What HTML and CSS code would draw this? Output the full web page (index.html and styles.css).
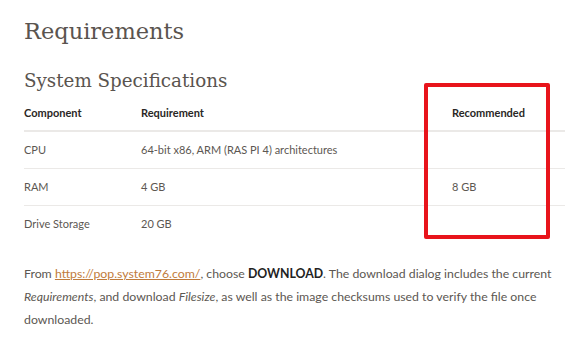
FILE: index.html
```html
<!DOCTYPE html>
<html lang="en">

<head>
  <meta charset="UTF-8">
  <meta name="viewport" content="width=device-width, initial-scale=1.0">
  <title>Requirements</title>
  <link rel="stylesheet" href="styles.css">
</head>

<body>
  <main class="doc">
    <h1>Requirements</h1>

    <h2>System Specifications</h2>

    <div class="spec-wrap">
      <table class="spec">
        <thead>
          <tr>
            <th class="col-comp">Component</th>
            <th class="col-req">Requirement</th>
            <th class="col-rec">Recommended</th>
          </tr>
        </thead>
        <tbody>
          <tr>
            <td>CPU</td>
            <td>64-bit x86, ARM (RAS PI 4) architectures</td>
            <td></td>
          </tr>
          <tr>
            <td>RAM</td>
            <td>4 GB</td>
            <td>8 GB</td>
          </tr>
          <tr>
            <td>Drive Storage</td>
            <td>20 GB</td>
            <td></td>
          </tr>
        </tbody>
      </table>
      <div class="highlight"></div>
    </div>

    <p class="note">From <a href="https://pop.system76.com/">https://pop.system76.com/</a>, choose <strong>DOWNLOAD</strong>. The download dialog includes the current <em>Requirements</em>, and download <em>Filesize</em>, as well as the image checksums used to verify the file once downloaded.</p>
  </main>
</body>

</html>
```

FILE: styles.css
```css
* {
  box-sizing: border-box;
  margin: 0;
  padding: 0;
}

body {
  background: #fff;
  color: #5c5752;
  font-family: 'Lato', sans-serif;
}

.doc {
  padding: 14px 20px 0 24px;
}

h1 {
  font-family: 'DejaVu Serif', serif;
  font-weight: normal;
  font-size: 22.5px;
  line-height: 34px;
  color: #5a544f;
  margin-bottom: 20px;
}

h2 {
  font-family: 'DejaVu Serif', serif;
  font-weight: normal;
  font-size: 18.3px;
  line-height: 26px;
  color: #5a544f;
  margin-bottom: 0;
}

.spec-wrap {
  position: relative;
}

.spec {
  width: 541px;
  border-collapse: collapse;
  font-size: 11px;
}

.spec th {
  text-align: left;
  color: #2a2725;
  font-weight: bold;
  height: 37px;
  border-bottom: 2px solid #ebe9e7;
}

.spec td {
  height: 37px;
  border-bottom: 1px solid #ebe9e7;
}

.spec tbody tr:last-child td {
  border-bottom: none;
}

.col-comp {
  width: 117px;
}

.col-req {
  width: 311px;
}

.highlight {
  position: absolute;
  left: 400px;
  top: -11px;
  width: 126px;
  height: 156px;
  border: 4px solid #e8141b;
  border-radius: 2px;
}

.note {
  margin-top: 20px;
  font-size: 12.3px;
  line-height: 23px;
}

.note a {
  color: #bf7b3b;
}

.note strong {
  color: #222;
}
```
